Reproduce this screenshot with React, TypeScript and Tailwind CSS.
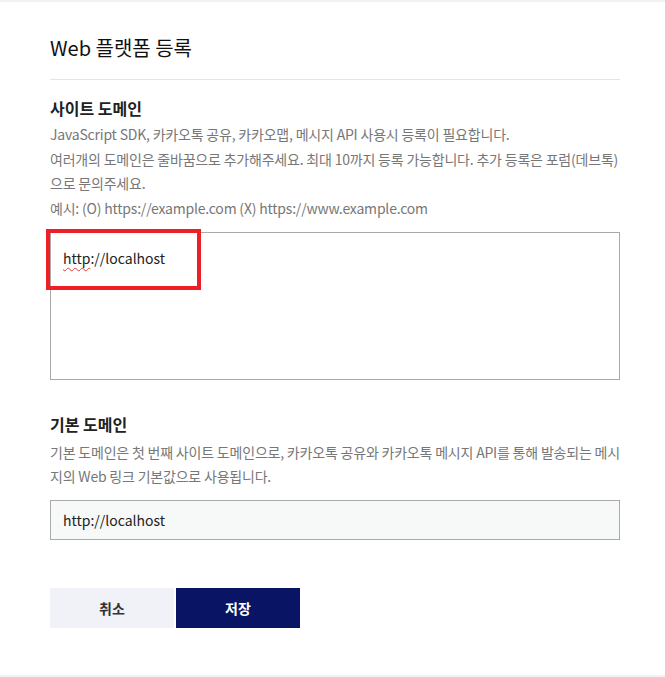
export default function App() {
  return (
    <div
      className="min-h-[677px] bg-white border-t-2 border-[#f2f2f2] flex flex-col"
      style={{ fontFamily: '"Noto Sans CJK KR", "Noto Sans", sans-serif' }}
    >
      <div className="w-[570px] ml-[50px] pt-[31px] pb-[47px]">
        <h1 className="text-[20px] leading-[30px] text-[#111]">Web 플랫폼 등록</h1>
        <div className="mt-[16px] border-t border-[#e5e5e5]" />

        {/* 사이트 도메인 */}
        <h2 className="mt-[16px] text-[16px] leading-[24px] font-bold text-[#222]">사이트 도메인</h2>
        <p className="mt-[2px] text-[14px] leading-[24.6px] text-[#777] tracking-[-0.2px]">
          <span className="block">JavaScript SDK, 카카오톡 공유, 카카오맵, 메시지 API 사용시 등록이 필요합니다.</span>
          <span className="block whitespace-nowrap">
            여러개의 도메인은 줄바꿈으로 추가해주세요. 최대 10까지 등록 가능합니다. 추가 등록은 포럼(데브톡)
          </span>
          <span className="block">으로 문의주세요.</span>
          <span className="block">예시: (O) https://example.com (X) https://www.example.com</span>
        </p>

        <div className="relative mt-[12px]">
          <div className="h-[148px] border border-[#aaaaaa] px-[12px] pt-[15px] text-[14px] leading-[20px] text-[#222]">
            <span className="underline decoration-wavy decoration-[#e53935] decoration-1 underline-offset-[3px]">http</span>
            ://localhost
          </div>
          <div className="absolute left-[-4px] top-[-3px] w-[155px] h-[61px] border-[4px] border-[#ee1f27]" />
        </div>

        {/* 기본 도메인 */}
        <h2 className="mt-[32px] text-[16px] leading-[24px] font-bold text-[#222]">기본 도메인</h2>
        <p className="mt-[4px] text-[14px] leading-[24px] text-[#777] tracking-[-0.2px]">
          <span className="block whitespace-nowrap">
            기본 도메인은 첫 번째 사이트 도메인으로, 카카오톡 공유와 카카오톡 메시지 API를 통해 발송되는 메시
          </span>
          <span className="block">지의 Web 링크 기본값으로 사용됩니다.</span>
        </p>

        <div className="mt-[12px] h-[40px] border border-[#aaaaaa] bg-[#f7f8f8] px-[12px] flex items-center text-[14px] text-[#222]">
          http://localhost
        </div>

        <div className="mt-[48px] flex gap-[2px]">
          <button className="w-[124px] h-[40px] bg-[#f1f2f8] text-[14px] font-bold text-[#333]">취소</button>
          <button className="w-[124px] h-[40px] bg-[#0a1464] text-[14px] font-bold text-white">저장</button>
        </div>
      </div>
      <div className="mt-auto h-[2px] bg-[#f2f2f2]" />
    </div>
  );
}
